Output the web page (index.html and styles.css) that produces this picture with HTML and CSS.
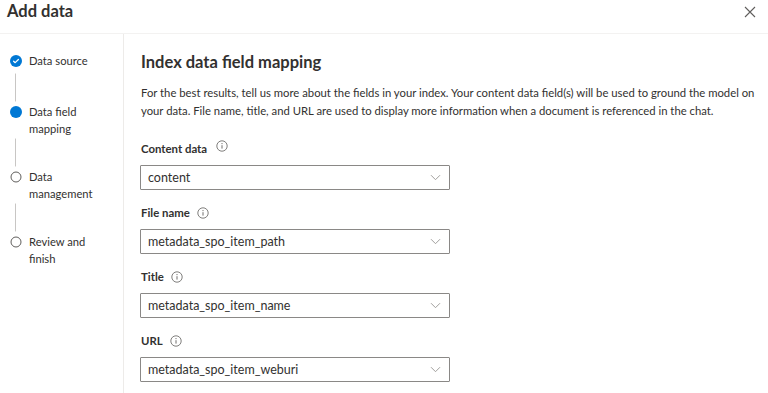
FILE: index.html
```html
<!DOCTYPE html>
<html lang="en">
<head>
<meta charset="utf-8">
<title>Add data</title>
<link rel="stylesheet" href="styles.css">
</head>
<body>
<div class="panel">
  <header class="header">
    <h1 class="title">Add data</h1>
    <button class="close" aria-label="Close">
      <svg width="12" height="12" viewBox="0 0 12 12"><path d="M1 1 L11 11 M11 1 L1 11" stroke="#605e5c" stroke-width="1.1" fill="none"/></svg>
    </button>
  </header>
  <div class="body">
    <nav class="steps">
      <div class="step">
        <div class="step-row">
          <span class="icon">
            <svg width="12" height="12" viewBox="0 0 12 12"><circle cx="6" cy="6" r="6" fill="#0078d4"/><path d="M3.6 6.2 L5.2 7.7 L8.4 4.5" stroke="#fff" stroke-width="1.2" fill="none" stroke-linecap="round" stroke-linejoin="round"/></svg>
          </span>
          <span class="label">Data source</span>
        </div>
        <div class="connector"></div>
      </div>
      <div class="step">
        <div class="step-row">
          <span class="icon">
            <svg width="12" height="12" viewBox="0 0 12 12"><circle cx="6" cy="6" r="6" fill="#0078d4"/></svg>
          </span>
          <span class="label">Data field<br>mapping</span>
        </div>
        <div class="connector"></div>
      </div>
      <div class="step">
        <div class="step-row">
          <span class="icon">
            <svg width="12" height="12" viewBox="0 0 12 12"><circle cx="6" cy="6" r="5" fill="none" stroke="#605e5c" stroke-width="1"/></svg>
          </span>
          <span class="label">Data<br>management</span>
        </div>
        <div class="connector"></div>
      </div>
      <div class="step">
        <div class="step-row">
          <span class="icon">
            <svg width="12" height="12" viewBox="0 0 12 12"><circle cx="6" cy="6" r="5" fill="none" stroke="#605e5c" stroke-width="1"/></svg>
          </span>
          <span class="label">Review and<br>finish</span>
        </div>
      </div>
    </nav>
    <main class="content">
      <h2 class="heading">Index data field mapping</h2>
      <p class="intro">For the best results, tell us more about the fields in your index. Your content data field(s) will be used to ground the model on<br>your data. File name, title, and URL are used to display more information when a document is referenced in the chat.</p>

      <div class="field">
        <div class="field-label">Content data <span class="info info-raised"><svg width="12" height="12" viewBox="0 0 12 12"><circle cx="6" cy="6" r="5.2" fill="none" stroke="#605e5c" stroke-width="0.8"/><path d="M6 5.2 V8.6" stroke="#605e5c" stroke-width="0.9"/><circle cx="6" cy="3.6" r="0.55" fill="#605e5c"/></svg></span></div>
        <div class="dropdown"><span>content</span><svg class="chev" width="11" height="7" viewBox="0 0 11 7"><path d="M1 1.2 L5.5 5.7 L10 1.2" stroke="#a19f9d" stroke-width="1" fill="none"/></svg></div>
      </div>
      <div class="field">
        <div class="field-label">File name <span class="info"><svg width="12" height="12" viewBox="0 0 12 12"><circle cx="6" cy="6" r="5.2" fill="none" stroke="#605e5c" stroke-width="0.8"/><path d="M6 5.2 V8.6" stroke="#605e5c" stroke-width="0.9"/><circle cx="6" cy="3.6" r="0.55" fill="#605e5c"/></svg></span></div>
        <div class="dropdown"><span>metadata_spo_item_path</span><svg class="chev" width="11" height="7" viewBox="0 0 11 7"><path d="M1 1.2 L5.5 5.7 L10 1.2" stroke="#a19f9d" stroke-width="1" fill="none"/></svg></div>
      </div>
      <div class="field">
        <div class="field-label">Title <span class="info"><svg width="12" height="12" viewBox="0 0 12 12"><circle cx="6" cy="6" r="5.2" fill="none" stroke="#605e5c" stroke-width="0.8"/><path d="M6 5.2 V8.6" stroke="#605e5c" stroke-width="0.9"/><circle cx="6" cy="3.6" r="0.55" fill="#605e5c"/></svg></span></div>
        <div class="dropdown"><span>metadata_spo_item_name</span><svg class="chev" width="11" height="7" viewBox="0 0 11 7"><path d="M1 1.2 L5.5 5.7 L10 1.2" stroke="#a19f9d" stroke-width="1" fill="none"/></svg></div>
      </div>
      <div class="field">
        <div class="field-label">URL <span class="info"><svg width="12" height="12" viewBox="0 0 12 12"><circle cx="6" cy="6" r="5.2" fill="none" stroke="#605e5c" stroke-width="0.8"/><path d="M6 5.2 V8.6" stroke="#605e5c" stroke-width="0.9"/><circle cx="6" cy="3.6" r="0.55" fill="#605e5c"/></svg></span></div>
        <div class="dropdown"><span>metadata_spo_item_weburi</span><svg class="chev" width="11" height="7" viewBox="0 0 11 7"><path d="M1 1.2 L5.5 5.7 L10 1.2" stroke="#a19f9d" stroke-width="1" fill="none"/></svg></div>
      </div>
    </main>
  </div>
</div>
</body>
</html>
```
FILE: styles.css
```css
* { box-sizing: border-box; }
html, body { margin: 0; padding: 0; background: #fff; }
body {
  font-family: "Lato", "Open Sans", sans-serif;
  color: #323130;
  width: 768px;
  height: 393px;
  overflow: hidden;
}
.panel { display: flex; flex-direction: column; height: 100%; }
.header {
  flex: 0 0 34px;
  height: 34px;
  display: flex;
  align-items: center;
  justify-content: space-between;
  padding: 0 12px 0 7px;
  border-bottom: 1px solid #f3f2f1;
}
.title {
  margin: -11px 0 0;
  font-size: 16.5px;
  font-weight: 700;
  line-height: 24px;
}
.close {
  border: 0;
  background: none;
  padding: 0;
  width: 12px;
  height: 12px;
  margin-top: -10px;
  display: flex;
}
.body { display: flex; flex: 1 1 auto; min-height: 0; }
.steps {
  flex: 0 0 124px;
  width: 124px;
  border-right: 1px solid #edebe9;
  padding: 18px 0 0 10px;
  font-size: 11.2px;
}
.step-row { display: flex; align-items: flex-start; min-height: 20px; }
.icon { width: 12px; height: 17px; display: flex; align-items: center; margin-right: 7px; flex: 0 0 12px; }
.icon svg { display: block; }
.label { line-height: 17px; color: #323130; }
.connector {
  height: 31px;
  margin-left: 5px;
  border-left: 1px solid #c8c6c4;
  transform: scaleY(0.9);
}
.content { flex: 1; padding: 16px 10px 0 17px; }
.heading {
  margin: 0;
  font-size: 16.5px;
  font-weight: 700;
  line-height: 24px;
}
.intro {
  margin: 10px 0 0;
  font-size: 11.3px;
  line-height: 18px;
  white-space: nowrap;
}
.field { margin-top: 13px; }
.field:first-of-type { margin-top: 19px; }
.field-label {
  font-size: 11.4px;
  font-weight: 700;
  line-height: 20px;
  display: flex;
  align-items: center;
}
.info { display: inline-flex; margin-left: 7px; }
.info-raised { position: relative; top: -3px; margin-left: 9px; }
.dropdown {
  margin-top: 6px;
  width: 310px;
  height: 25px;
  margin-left: -1px;
  border: 1px solid #8a8886;
  border-radius: 1px;
  display: flex;
  align-items: center;
  justify-content: space-between;
  padding: 0 8px 0 7px;
  font-size: 12.5px;
  color: #323130;
}
.chev { display: block; }
```
